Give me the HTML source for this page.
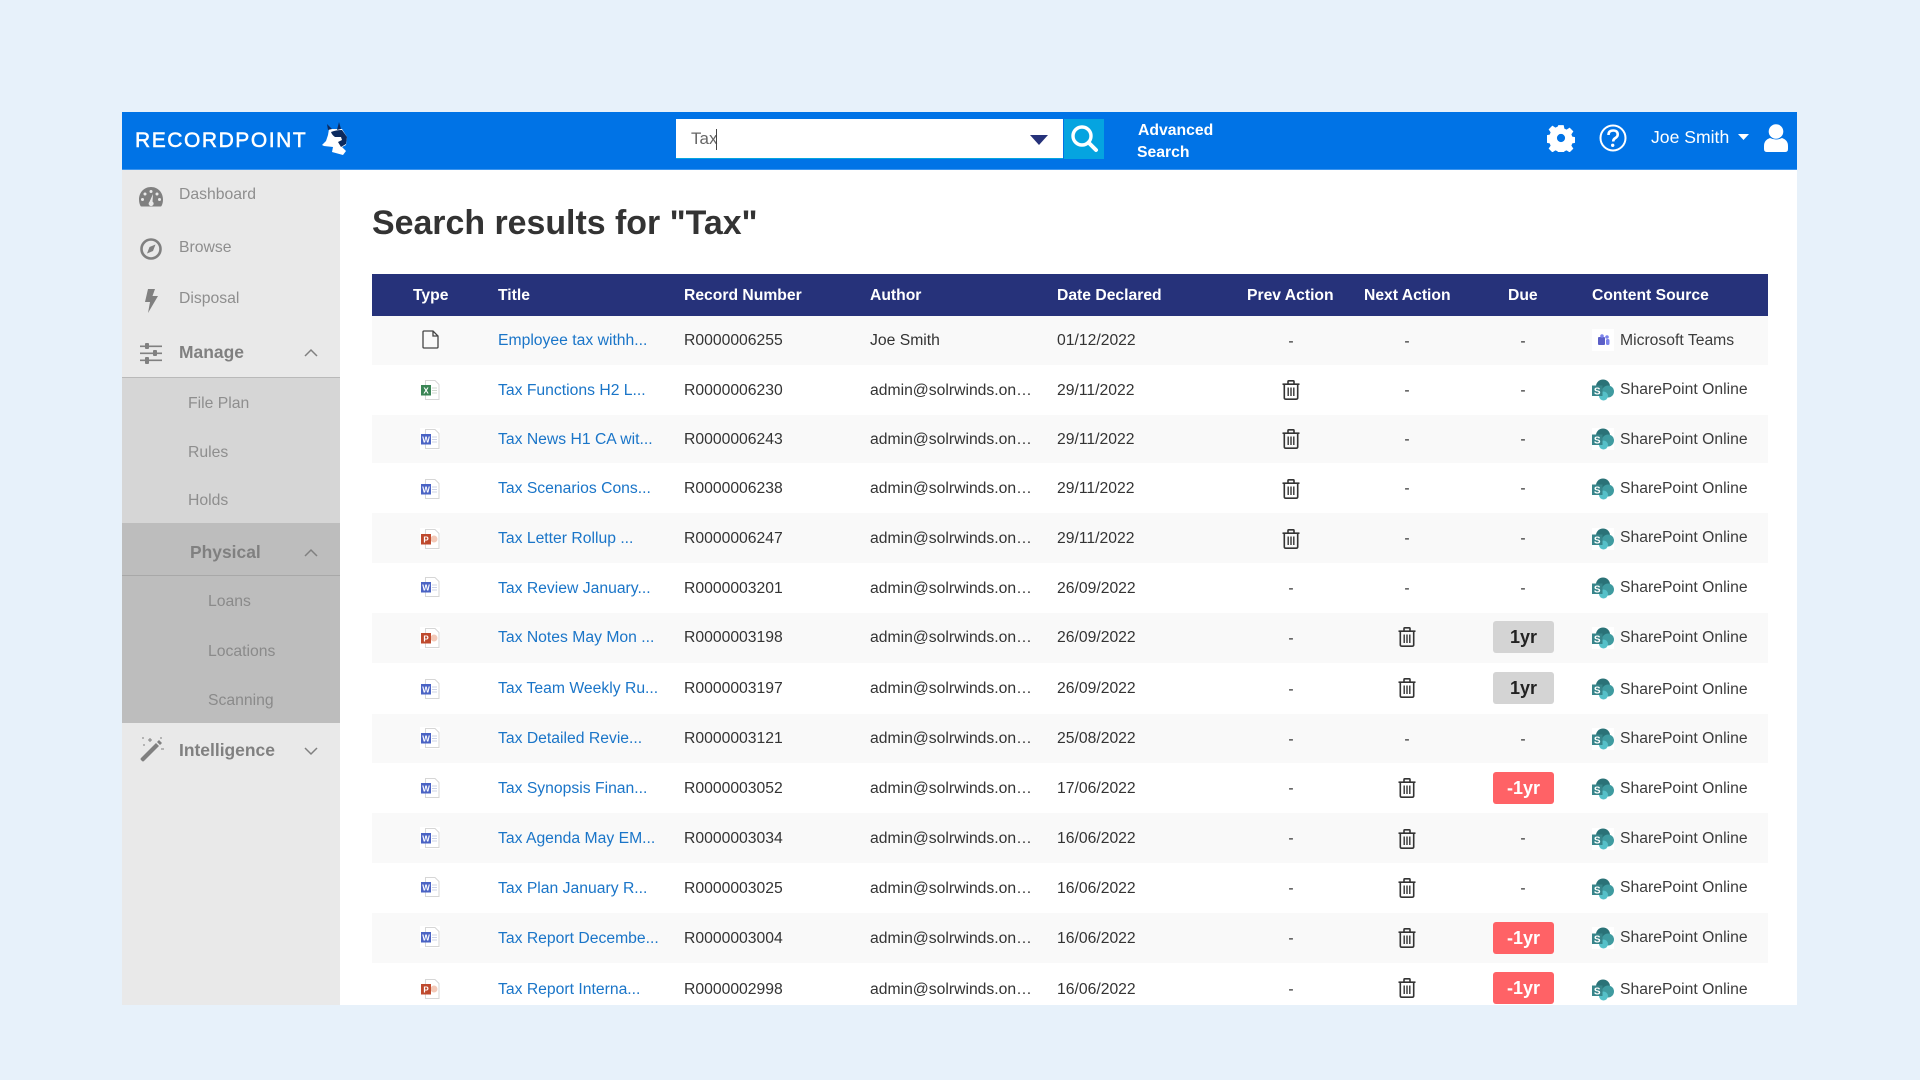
<!DOCTYPE html>
<html lang="en"><head><meta charset="utf-8"><title>RecordPoint</title>
<style>
*{box-sizing:border-box}
html,body{margin:0;padding:0;width:1920px;height:1080px;overflow:hidden;background:#e7f1fa;font-family:"Liberation Sans",Arial,sans-serif;color:#333}
body{filter:blur(.3px)}
.a{position:absolute;white-space:nowrap}
#hdr{position:absolute;left:122px;top:112px;width:1675px;height:58px;background:#0073e6;border-bottom:1px solid #3d95ee;z-index:1}
#side{position:absolute;left:122px;top:169px;width:218px;height:836px;background:#e9e9e9}
#main{position:absolute;left:340px;top:169px;width:1457px;height:836px;background:#fff}
.z{z-index:2}
.n{color:#8e8e8e;font-size:15.75px;line-height:20px}
.b{font-weight:bold;font-size:17.45px;color:#808080;line-height:22px}
.s{color:#8e8e8e;font-size:15.75px;line-height:20px}
#clip{position:absolute;left:372px;top:274px;width:1396px;height:731px;overflow:hidden}
.th{position:absolute;top:0;left:0;width:1396px;height:42px;background:#26327a}
.th b{position:absolute;top:1px;line-height:42px;color:#fff;font-size:15.7px;white-space:nowrap}
.r{position:absolute;left:0;width:1396px;font-size:15.72px;color:#333}
.g{background:#f9f9f9}
.r span{position:absolute;top:0;height:100%;display:flex;align-items:center;white-space:nowrap;margin-top:1px}
.n0 span{margin-top:0}
.l span{margin-top:2px}
.r svg{position:absolute}
.c1{left:126px;color:#1a75c8}
.c2{left:312px}
.c3{left:498px}
.c4{left:685px}
.r span.p{left:919px;width:0;justify-content:center;margin-top:1px}
.r span.x{left:1035px;width:0;justify-content:center;margin-top:1px}
.r span.d{left:1151px;width:0;justify-content:center;margin-top:1px}
.r span.c9{left:1248px;margin-top:0;color:#3c3c3c}
.r span.u{margin-top:1px}
.r.l span.c9{margin-top:2px}
.bd{position:absolute;left:1121px;width:61px;height:32px;border-radius:3px;font-weight:bold;font-size:18px;line-height:32px;text-align:center;background:#d4d4d4;color:#222}
.rd{background:#ff6266;color:#fff}
</style></head>
<body>
<svg width="0" height="0" style="position:absolute">
<symbol id="t" viewBox="0 0 18 20"><g fill="none" stroke="#333" stroke-width="1.6"><path d="M.5 4.2h17"/><path d="M6 4V1.6Q6 .8 6.8 .8h4.400q.8 0 .8 .8V4"/><path d="M2.300 4.500V17.800q0 1.400 1.400 1.400h10.600q1.400 0 1.400-1.400V4.500"/><path d="M6.200 7.500v8.500M9 7.500v8.500M11.800 7.500v8.500" stroke-width="1.400"/></g></symbol>
<symbol id="w" viewBox="0 0 20 22"><rect width="20" height="22" fill="#fff"/><path d="M5.500 1.500H15l4 4v15H5.500z" fill="#fff" stroke="#d6d6d6"/><path d="M12 9h5M12 11.500h5M12 14h5" stroke="#cdd3e6"/><rect x="1" y="6" width="10" height="10.500" fill="#4a63c4"/><text x="6" y="14.500" font-size="8" font-weight="bold" fill="#fff" text-anchor="middle" font-family="Liberation Sans">W</text></symbol>
<symbol id="e" viewBox="0 0 20 22"><path d="M5.500 1.500H15l4 4v15H5.500z" fill="#fff" stroke="#d6d6d6"/><path d="M12 9h5M12 11.500h5M12 14h5" stroke="#cfd8cf"/><rect x="1" y="6" width="10" height="10.500" fill="#3a8555"/><text x="6" y="14.500" font-size="8" font-weight="bold" fill="#fff" text-anchor="middle" font-family="Liberation Sans">X</text></symbol>
<symbol id="q" viewBox="0 0 20 22"><rect width="20" height="22" fill="#fff"/><path d="M5.500 1.500H15l4 4v15H5.500z" fill="#fff" stroke="#d6d6d6"/><circle cx="14" cy="11" r="3.500" fill="#f3c9b8"/><rect x="1" y="6" width="10" height="10.500" fill="#bf4a2e"/><text x="6" y="14.500" font-size="8" font-weight="bold" fill="#fff" text-anchor="middle" font-family="Liberation Sans">P</text></symbol>
<symbol id="sp" viewBox="0 0 22 22"><rect width="22" height="22" fill="#fff"/><circle cx="11" cy="7.500" r="7" fill="#2a7277"/><circle cx="16" cy="12.500" r="6" fill="#3f9ba0"/><circle cx="11.500" cy="17" r="4.500" fill="#55c0c8"/><rect x="0" y="6.500" width="10.500" height="10.500" fill="#37858a"/><text x="5.200" y="15.500" font-size="10" font-weight="bold" fill="#fff" text-anchor="middle" font-family="Liberation Sans">S</text></symbol>
</svg>

<div id="hdr"></div>
<div class="a z" style="left:135px;top:126px;font-size:21px;line-height:30px;color:#fff;letter-spacing:1.55px;-webkit-text-stroke:.5px #fff">RECORDPOINT</div>
<svg class="a z" style="left:322px;top:121px" width="28" height="35" viewBox="0 0 28 35"><path d="M7 8 20 8 25 16 24 24 20 26 24 30 21 34 10 31 11 26 2 25 0 24 4 20 6 14z" fill="#fff"/><path d="M5 3 10 8 6 9zM17 1 19 8 15 9z" fill="#0c2a5e"/><path d="M9 11Q14 9 20 9L25 16 24 23 19 26 16 21 20 19 19 16 13 16Q10 14 9 11z" fill="#0c2a5e"/></svg>

<div class="a z" style="left:676px;top:119px;width:387px;height:40px;background:#fff;border-bottom:1px solid #05a4de"></div>
<div class="a z" style="left:691px;top:129px;font-size:17px;line-height:20px;color:#666">Tax</div>
<div class="a z" style="left:716px;top:129px;width:1px;height:21px;background:#444"></div>
<svg class="a z" style="left:1030px;top:135px" width="18" height="10"><path d="M0 0h18L9 10z" fill="#26327a"/></svg>
<div class="a z" style="left:1064px;top:119px;width:40px;height:40px;background:#05a4e0"></div>
<svg class="a z" style="left:1070px;top:124px" width="29" height="29" viewBox="0 0 29 29"><circle cx="12" cy="12" r="9" fill="none" stroke="#fff" stroke-width="3.400"/><path d="M18.500 18.500 26 26" stroke="#fff" stroke-width="4" stroke-linecap="round"/></svg>
<div class="a z" style="left:1138px;top:120px;font-size:15.75px;line-height:22px;font-weight:bold;color:#fff">Advanced</div>
<div class="a z" style="left:1137px;top:142px;font-size:15.75px;line-height:22px;font-weight:bold;color:#fff">Search</div>

<svg class="a z" style="left:1547px;top:124px" width="28" height="28" viewBox="0 0 24 24"><path fill="#fff" fill-rule="evenodd" d="M9.700 1h4.600l.6 3 1.900.8 2.600-1.700 3.200 3.200-1.700 2.600.8 1.900 3 .6v4.600l-3 .6-.8 1.900 1.700 2.600-3.200 3.200-2.600-1.700-1.900.8-.6 3H9.700l-.6-3-1.900-.8-2.600 1.700-3.200-3.200 1.700-2.600-.8-1.900-3-.6V9.700l3-.6.8-1.900L1.400 4.600 4.600 1.400l2.600 1.700 1.900-.8zM12 8.500a3.500 3.500 0 1 0 0 7 3.500 3.500 0 0 0 0-7z"/></svg>
<svg class="a z" style="left:1599px;top:124px" width="28" height="28" viewBox="0 0 28 28"><circle cx="14" cy="14" r="12.500" fill="none" stroke="#fff" stroke-width="2"/><path d="M9.500 11q0-4.500 4.700-4.500 4.500 0 4.500 4 0 2.200-2.500 3.600-2 1.200-2 3.400" fill="none" stroke="#fff" stroke-width="2.600"/><circle cx="13.700" cy="21.300" r="1.700" fill="#fff"/></svg>
<div class="a z" style="left:1651px;top:127px;font-size:17.6px;line-height:20px;color:#fff">Joe Smith</div>
<svg class="a z" style="left:1738px;top:134px" width="11" height="6"><path d="M0 0h11L5.500 6z" fill="#fff"/></svg>
<svg class="a z" style="left:1764px;top:124px" width="24" height="29" viewBox="0 0 24 29"><circle cx="12" cy="7.500" r="7.300" fill="#fff"/><path d="M0 22q0-6 6-8 6 3 12 0 6 2 6 8v3q0 3-3 3H3q-3 0-3-3z" fill="#fff"/></svg>

<div id="side"></div>
<div id="main"></div>
<div class="a" style="left:122px;top:377px;width:218px;height:146px;background:#d6d6d6;border-top:1px solid #b9b9b9"></div>
<div class="a" style="left:122px;top:523px;width:218px;height:200px;background:#bdbdbd"></div>
<div class="a" style="left:122px;top:575px;width:218px;height:1px;background:#a8a8a8"></div>

<svg class="a" style="left:139px;top:187px" width="24" height="20" viewBox="0 0 24 20"><path fill="#808080" fill-rule="evenodd" d="M12 0C5 0 0 5.500 0 12.500c0 2.500.5 4.500 1.500 6.500q.3.500 1 .5h19q.7 0 1-.5c1-2 1.500-4 1.500-6.500C24 5.500 19 0 12 0zM12 3a1.500 1.500 0 1 1 0 3 1.500 1.500 0 0 1 0-3zM6 5.500a1.500 1.500 0 1 1 0 3 1.500 1.500 0 0 1 0-3zM18 5.500a1.500 1.500 0 1 1 0 3 1.500 1.500 0 0 1 0-3zM3.500 11a1.500 1.500 0 1 1 0 3 1.500 1.500 0 0 1 0-3zM20.500 11a1.500 1.500 0 1 1 0 3 1.500 1.500 0 0 1 0-3zM14 7l-.5 7.500a2.500 2.500 0 1 1-3 .2z"/></svg>
<svg class="a" style="left:140px;top:238px" width="22" height="22" viewBox="0 0 22 22"><circle cx="11" cy="11" r="9.500" fill="none" stroke="#808080" stroke-width="2.600"/><path d="M15.500 6.500 13 13l-6 2.500L9.500 9z" fill="#808080"/></svg>
<svg class="a" style="left:145px;top:289px" width="13" height="24" viewBox="0 0 13 24"><path d="M3 0h7L7.500 7H13L3 24l2-11H0z" fill="#808080"/></svg>
<svg class="a" style="left:140px;top:343px" width="22" height="21" viewBox="0 0 22 21" fill="#808080"><path d="M0 2.500h22v1.600H0zM0 9.500h22v1.600H0zM0 16.500h22v1.600H0z"/><rect x="5" y="0" width="4" height="6" rx="1"/><rect x="13" y="7" width="4" height="6" rx="1"/><rect x="5" y="14" width="4" height="7" rx="1"/></svg>
<svg class="a" style="left:140px;top:737px" width="24" height="25" viewBox="0 0 24 25"><path d="M1 21 16 6l3 3L4 24q-1 1-2 0l-1-1q-1-1 0-2z" fill="#808080"/><path d="M17 5l2-2 3 3-2 2z" fill="#808080"/><path d="M8 3h4M10 1v4M21 12h3M2 1h2M20 1h2M3 8h2" stroke="#808080"/></svg>

<div class="a n" style="left:179px;top:185px">Dashboard</div>
<div class="a n" style="left:179px;top:238px">Browse</div>
<div class="a n" style="left:179px;top:289px">Disposal</div>
<div class="a b" style="left:179px;top:341px">Manage</div>
<div class="a s" style="left:188px;top:394px">File Plan</div>
<div class="a s" style="left:188px;top:443px">Rules</div>
<div class="a s" style="left:188px;top:491px">Holds</div>
<div class="a b" style="left:190px;top:541px">Physical</div>
<div class="a s" style="left:208px;top:592px;color:#8a8a8a">Loans</div>
<div class="a s" style="left:208px;top:642px;color:#8a8a8a">Locations</div>
<div class="a s" style="left:208px;top:691px;color:#8a8a8a">Scanning</div>
<div class="a b" style="left:179px;top:739px">Intelligence</div>
<svg class="a" style="left:304px;top:348px" width="14" height="9"><path d="M1 8l6-6 6 6" fill="none" stroke="#808080" stroke-width="1.500"/></svg>
<svg class="a" style="left:304px;top:548px" width="14" height="9"><path d="M1 8l6-6 6 6" fill="none" stroke="#808080" stroke-width="1.500"/></svg>
<svg class="a" style="left:304px;top:747px" width="14" height="9"><path d="M1 1l6 6 6-6" fill="none" stroke="#808080" stroke-width="1.500"/></svg>

<div class="a" style="left:372px;top:200.500px;font-size:33.900px;line-height:44px;font-weight:bold;color:#333">Search results for "Tax"</div>

<div id="clip">
<div class="th"><b style="left:41px">Type</b><b style="left:126px">Title</b><b style="left:312px">Record Number</b><b style="left:498px">Author</b><b style="left:685px">Date Declared</b><b style="left:875px">Prev Action</b><b style="left:992px">Next Action</b><b style="left:1136px">Due</b><b style="left:1220px">Content Source</b></div>

<div class="r g n0" style="top:42px;height:49px"><svg style="left:50px;top:14px" width="17" height="19" viewBox="0 0 17 19"><path d="M1 2q0-1 1-1h9l5 5v11q0 1-1 1H2q-1 0-1-1zM11 1v5h5" fill="none" stroke="#444" stroke-width="1.300"/></svg><span class="c1">Employee tax withh...</span><span class="c2">R0000006255</span><span class="c3">Joe Smith</span><span class="c4">01/12/2022</span><span class="p">-</span><span class="x">-</span><span class="d">-</span><svg style="left:1220px;top:13px" width="22" height="22" viewBox="0 0 22 22"><rect width="22" height="22" fill="#fff"/><rect x="6" y="8" width="7" height="8" rx="1" fill="#5b5fc7"/><circle cx="15" cy="8" r="1.800" fill="#7b83eb"/><circle cx="10" cy="7" r="1.800" fill="#7b83eb"/><rect x="14" y="10" width="3.500" height="6" rx="1.500" fill="#7b83eb"/></svg><span class="c9">Microsoft Teams</span></div>

<div class="r" style="top:91px;height:50px"><svg style="left:48px;top:14px" width="20" height="22"><use href="#e"/></svg><span class="c1">Tax Functions H2 L...</span><span class="c2">R0000006230</span><span class="c3">admin@solrwinds.on…</span><span class="c4">29/11/2022</span><svg style="left:910px;top:15px" width="18" height="20"><use href="#t"/></svg><span class="x">-</span><span class="d">-</span><svg style="left:1220px;top:14px" width="22" height="22"><use href="#sp"/></svg><span class="c9">SharePoint Online</span></div>

<div class="r g" style="top:141px;height:48px"><svg style="left:48px;top:13px" width="20" height="22"><use href="#w"/></svg><span class="c1">Tax News H1 CA wit...</span><span class="c2">R0000006243</span><span class="c3">admin@solrwinds.on…</span><span class="c4">29/11/2022</span><svg style="left:910px;top:14px" width="18" height="20"><use href="#t"/></svg><span class="x">-</span><span class="d">-</span><svg style="left:1220px;top:13px" width="22" height="22"><use href="#sp"/></svg><span class="c9 u">SharePoint Online</span></div>

<div class="r" style="top:189px;height:50px"><svg style="left:48px;top:15px" width="20" height="22"><use href="#w"/></svg><span class="c1">Tax Scenarios Cons...</span><span class="c2">R0000006238</span><span class="c3">admin@solrwinds.on…</span><span class="c4">29/11/2022</span><svg style="left:910px;top:16px" width="18" height="20"><use href="#t"/></svg><span class="x">-</span><span class="d">-</span><svg style="left:1220px;top:15px" width="22" height="22"><use href="#sp"/></svg><span class="c9 u">SharePoint Online</span></div>

<div class="r g" style="top:239px;height:50px"><svg style="left:48px;top:15px" width="20" height="22"><use href="#q"/></svg><span class="c1">Tax Letter Rollup ...</span><span class="c2">R0000006247</span><span class="c3">admin@solrwinds.on…</span><span class="c4">29/11/2022</span><svg style="left:910px;top:16px" width="18" height="20"><use href="#t"/></svg><span class="x">-</span><span class="d">-</span><svg style="left:1220px;top:15px" width="22" height="22"><use href="#sp"/></svg><span class="c9">SharePoint Online</span></div>

<div class="r" style="top:289px;height:50px"><svg style="left:48px;top:13px" width="20" height="22"><use href="#w"/></svg><span class="c1">Tax Review January...</span><span class="c2">R0000003201</span><span class="c3">admin@solrwinds.on…</span><span class="c4">26/09/2022</span><span class="p">-</span><span class="x">-</span><span class="d">-</span><svg style="left:1220px;top:14px" width="22" height="22"><use href="#sp"/></svg><span class="c9">SharePoint Online</span></div>

<div class="r g n0" style="top:339px;height:50px"><svg style="left:48px;top:14px" width="20" height="22"><use href="#q"/></svg><span class="c1">Tax Notes May Mon ...</span><span class="c2">R0000003198</span><span class="c3">admin@solrwinds.on…</span><span class="c4">26/09/2022</span><span class="p">-</span><svg style="left:1026px;top:14px" width="18" height="20"><use href="#t"/></svg><div class="bd" style="top:8px">1yr</div><svg style="left:1220px;top:14px" width="22" height="22"><use href="#sp"/></svg><span class="c9">SharePoint Online</span></div>

<div class="r n0" style="top:389px;height:51px"><svg style="left:48px;top:15px" width="20" height="22"><use href="#w"/></svg><span class="c1">Tax Team Weekly Ru...</span><span class="c2">R0000003197</span><span class="c3">admin@solrwinds.on…</span><span class="c4">26/09/2022</span><span class="p">-</span><svg style="left:1026px;top:15px" width="18" height="20"><use href="#t"/></svg><div class="bd" style="top:9px">1yr</div><svg style="left:1220px;top:15px" width="22" height="22"><use href="#sp"/></svg><span class="c9 u">SharePoint Online</span></div>

<div class="r g n0" style="top:440px;height:49px"><svg style="left:48px;top:13px" width="20" height="22"><use href="#w"/></svg><span class="c1">Tax Detailed Revie...</span><span class="c2">R0000003121</span><span class="c3">admin@solrwinds.on…</span><span class="c4">25/08/2022</span><span class="p">-</span><span class="x">-</span><span class="d">-</span><svg style="left:1220px;top:14px" width="22" height="22"><use href="#sp"/></svg><span class="c9">SharePoint Online</span></div>

<div class="r" style="top:489px;height:50px"><svg style="left:48px;top:14px" width="20" height="22"><use href="#w"/></svg><span class="c1">Tax Synopsis Finan...</span><span class="c2">R0000003052</span><span class="c3">admin@solrwinds.on…</span><span class="c4">17/06/2022</span><span class="p">-</span><svg style="left:1026px;top:15px" width="18" height="20"><use href="#t"/></svg><div class="bd rd" style="top:9px">-1yr</div><svg style="left:1220px;top:15px" width="22" height="22"><use href="#sp"/></svg><span class="c9 u">SharePoint Online</span></div>

<div class="r g" style="top:539px;height:50px"><svg style="left:48px;top:14px" width="20" height="22"><use href="#w"/></svg><span class="c1">Tax Agenda May EM...</span><span class="c2">R0000003034</span><span class="c3">admin@solrwinds.on…</span><span class="c4">16/06/2022</span><span class="p">-</span><svg style="left:1026px;top:16px" width="18" height="20"><use href="#t"/></svg><span class="d">-</span><svg style="left:1220px;top:15px" width="22" height="22"><use href="#sp"/></svg><span class="c9 u">SharePoint Online</span></div>

<div class="r" style="top:589px;height:50px"><svg style="left:48px;top:13px" width="20" height="22"><use href="#w"/></svg><span class="c1">Tax Plan January R...</span><span class="c2">R0000003025</span><span class="c3">admin@solrwinds.on…</span><span class="c4">16/06/2022</span><span class="p">-</span><svg style="left:1026px;top:15px" width="18" height="20"><use href="#t"/></svg><span class="d">-</span><svg style="left:1220px;top:15px" width="22" height="22"><use href="#sp"/></svg><span class="c9">SharePoint Online</span></div>

<div class="r g" style="top:639px;height:50px"><svg style="left:48px;top:13px" width="20" height="22"><use href="#w"/></svg><span class="c1">Tax Report Decembe...</span><span class="c2">R0000003004</span><span class="c3">admin@solrwinds.on…</span><span class="c4">16/06/2022</span><span class="p">-</span><svg style="left:1026px;top:15px" width="18" height="20"><use href="#t"/></svg><div class="bd rd" style="top:9px">-1yr</div><svg style="left:1220px;top:14px" width="22" height="22"><use href="#sp"/></svg><span class="c9">SharePoint Online</span></div>

<div class="r l" style="top:689px;height:50px"><svg style="left:48px;top:15px" width="20" height="22"><use href="#q"/></svg><span class="c1">Tax Report Interna...</span><span class="c2">R0000002998</span><span class="c3">admin@solrwinds.on…</span><span class="c4">16/06/2022</span><span class="p" style="margin-top:2px">-</span><svg style="left:1026px;top:15px" width="18" height="20"><use href="#t"/></svg><div class="bd rd" style="top:9px">-1yr</div><svg style="left:1220px;top:16px" width="22" height="22"><use href="#sp"/></svg><span class="c9">SharePoint Online</span></div>
</div>
</body></html>
